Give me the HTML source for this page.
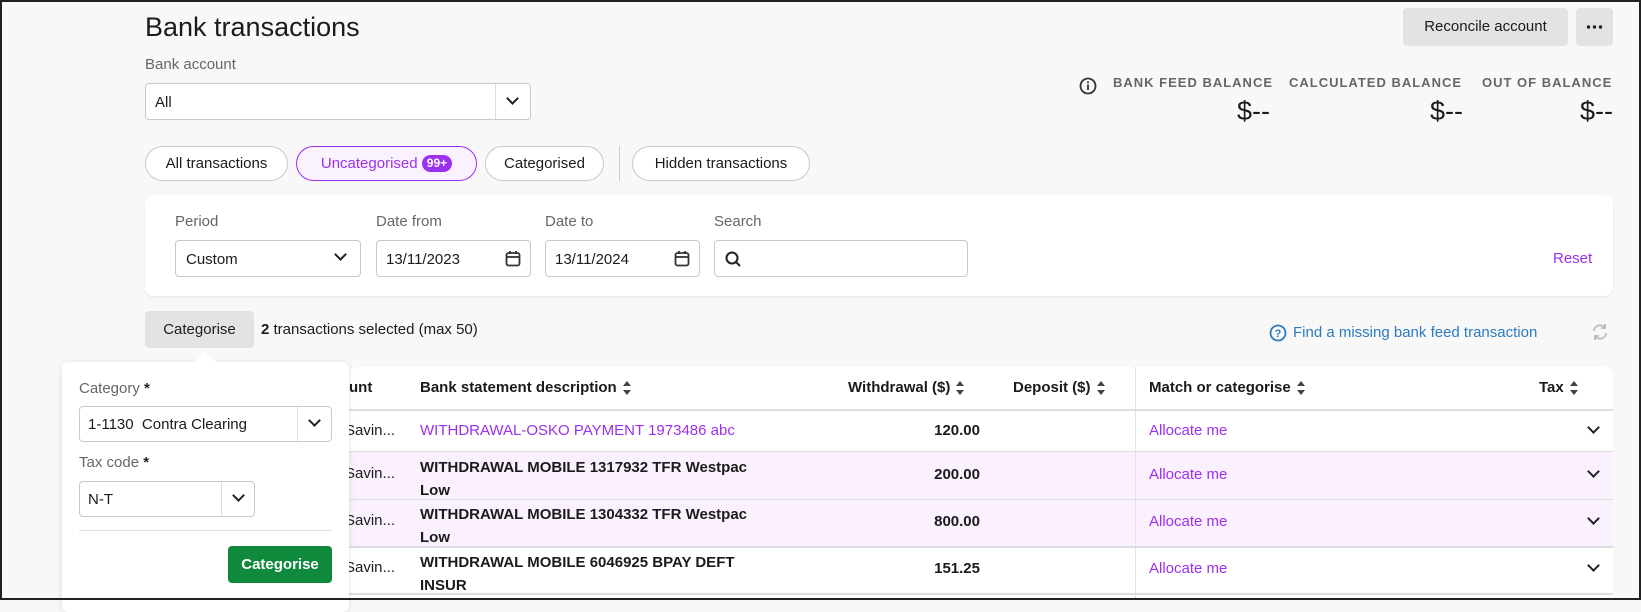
<!DOCTYPE html>
<html><head><meta charset="utf-8"><style>
*{box-sizing:border-box;margin:0;padding:0;white-space:nowrap}
body{width:1641px;height:600px;overflow:hidden;background:#f8f8f8;font-family:"Liberation Sans",sans-serif;color:#1b1b1b;position:relative;font-size:15px}
.frame{position:absolute;left:0;top:0;width:1641px;height:600px;border:2px solid #222;pointer-events:none;z-index:50}
.a{position:absolute}
.box{position:absolute;background:#fff;border:1px solid #c9c9c9;border-radius:4px}
.chev{position:absolute;width:9px;height:9px;border-right:2.2px solid #222;border-bottom:2.2px solid #222;transform:rotate(45deg)}
.pill{position:absolute;top:146px;height:35px;border:1px solid #c9c9c9;border-radius:18px;background:#fff;font-size:15px;line-height:33px;text-align:center}
.lbl{position:absolute;color:#666;font-size:15px}
.cap{position:absolute;color:#666;font-size:13px;font-weight:bold;letter-spacing:1px}
.big{position:absolute;font-size:27px;text-align:right}
.th{position:absolute;top:379px;font-weight:bold;font-size:15px}
.sort{display:inline-block;vertical-align:middle;margin-left:6px;width:8px;height:14px;position:relative}
.sort:before,.sort:after{content:"";position:absolute;left:0;border-left:4px solid transparent;border-right:4px solid transparent}
.sort:before{top:0;border-bottom:5px solid #444}.sort:after{bottom:0;border-top:5px solid #444}
.row{position:absolute;left:349px;width:1264px;border-top:1px solid #ddd}
.p{color:#9b30f0}
.cell{position:absolute;font-size:15px}
</style></head><body>
<div class="frame"></div>
<div class="a" style="left:145px;top:12px;font-size:27px">Bank transactions</div>
<div class="lbl" style="left:145px;top:56px">Bank account</div>
<div class="box" style="left:145px;top:83px;width:386px;height:37px"><span class="a" style="left:9px;top:10px">All</span><div class="a" style="left:349px;top:0;height:35px;border-left:1px solid #ddd"></div><div class="chev" style="left:362px;top:10px"></div></div>

<div class="pill" style="left:145px;width:143px">All transactions</div>
<div class="pill" style="left:296px;width:181px;border-color:#9b30f0;color:#9b30f0;background:#faf2fe">Uncategorised <span style="display:inline-block;background:#9b30f0;color:#fff;font-size:12px;font-weight:bold;border-radius:9px;padding:0 5px;line-height:17px;vertical-align:1px">99+</span></div>
<div class="pill" style="left:485px;width:119px">Categorised</div>
<div class="a" style="left:619px;top:146px;height:35px;border-left:1px solid #ccc"></div>
<div class="pill" style="left:632px;width:178px">Hidden transactions</div>

<div class="a" style="left:1403px;top:8px;width:165px;height:38px;background:#e3e3e3;border-radius:4px"><span class="a" style="left:0;width:165px;top:10px;text-align:center">Reconcile account</span></div>
<div class="a" style="left:1576px;top:8px;width:37px;height:38px;background:#e3e3e3;border-radius:4px">
<svg class="a" style="left:10px;top:17px" width="17" height="4"><circle cx="2.5" cy="2" r="1.7" fill="#222"/><circle cx="8.5" cy="2" r="1.7" fill="#222"/><circle cx="14.5" cy="2" r="1.7" fill="#222"/></svg></div>

<svg class="a" style="left:1079px;top:77px" width="18" height="18" viewBox="0 0 18 18"><circle cx="9" cy="9" r="7.5" fill="none" stroke="#333" stroke-width="1.8"/><circle cx="9" cy="5.3" r="1.1" fill="#333"/><rect x="8.1" y="7.5" width="1.8" height="5.5" fill="#333"/></svg>
<div class="cap" style="left:1113px;top:75px">BANK FEED BALANCE</div>
<div class="cap" style="left:1289px;top:75px">CALCULATED BALANCE</div>
<div class="cap" style="left:1482px;top:75px">OUT OF BALANCE</div>
<div class="big" style="right:371px;top:96px">$--</div>
<div class="big" style="right:178px;top:96px">$--</div>
<div class="big" style="right:28px;top:96px">$--</div>

<div class="a" style="left:145px;top:195px;width:1468px;height:101px;background:#fff;border-radius:8px;box-shadow:0 1px 2px rgba(0,0,0,.08)"></div>
<div class="lbl" style="left:175px;top:213px">Period</div>
<div class="lbl" style="left:376px;top:213px">Date from</div>
<div class="lbl" style="left:545px;top:213px">Date to</div>
<div class="lbl" style="left:714px;top:213px">Search</div>
<div class="box" style="left:175px;top:240px;width:186px;height:37px"><span class="a" style="left:10px;top:10px">Custom</span><div class="chev" style="left:160px;top:9px"></div></div>
<div class="box" style="left:376px;top:240px;width:155px;height:37px"><span class="a" style="left:9px;top:10px">13/11/2023</span>
<svg class="a" style="left:128px;top:9px" width="16" height="17" viewBox="0 0 16 17"><rect x="1.5" y="3" width="13" height="12.5" rx="2" fill="none" stroke="#333" stroke-width="1.8"/><line x1="1.5" y1="7" x2="14.5" y2="7" stroke="#333" stroke-width="1.8"/><line x1="5" y1="1" x2="5" y2="4" stroke="#333" stroke-width="1.8"/><line x1="11" y1="1" x2="11" y2="4" stroke="#333" stroke-width="1.8"/></svg></div>
<div class="box" style="left:545px;top:240px;width:155px;height:37px"><span class="a" style="left:9px;top:10px">13/11/2024</span>
<svg class="a" style="left:128px;top:9px" width="16" height="17" viewBox="0 0 16 17"><rect x="1.5" y="3" width="13" height="12.5" rx="2" fill="none" stroke="#333" stroke-width="1.8"/><line x1="1.5" y1="7" x2="14.5" y2="7" stroke="#333" stroke-width="1.8"/><line x1="5" y1="1" x2="5" y2="4" stroke="#333" stroke-width="1.8"/><line x1="11" y1="1" x2="11" y2="4" stroke="#333" stroke-width="1.8"/></svg></div>
<div class="box" style="left:714px;top:240px;width:254px;height:37px"><svg class="a" style="left:10px;top:10px" width="17" height="17" viewBox="0 0 17 17"><circle cx="7" cy="7" r="5.5" fill="none" stroke="#222" stroke-width="2"/><line x1="11" y1="11" x2="15" y2="15" stroke="#222" stroke-width="2"/></svg></div>
<div class="a p" style="left:1553px;top:250px">Reset</div>

<div class="a" style="left:145px;top:311px;width:109px;height:37px;background:#e3e3e3;border-radius:4px;text-align:center;line-height:37px">Categorise</div>
<div class="a" style="left:261px;top:321px"><b>2</b> transactions selected (max 50)</div>
<svg class="a" style="left:1269px;top:324px" width="18" height="18" viewBox="0 0 18 18"><circle cx="9" cy="9" r="7.5" fill="none" stroke="#2a7bbf" stroke-width="1.8"/><text x="9" y="13" font-size="11" font-weight="bold" text-anchor="middle" fill="#2a7bbf" font-family="Liberation Sans">?</text></svg>
<div class="a" style="left:1293px;top:324px;color:#2a7bbf">Find a missing bank feed transaction</div>
<svg class="a" style="left:1590px;top:322px" width="20" height="20" viewBox="0 0 20 20"><path d="M4 9a6 6 0 0 1 11-3M16 11a6 6 0 0 1-11 3" fill="none" stroke="#bbb" stroke-width="1.8"/><path d="M15 2v4h-4M5 18v-4h4" fill="none" stroke="#bbb" stroke-width="1.8"/></svg>

<div class="a" style="left:349px;top:367px;width:1264px;height:233px;background:#fff;border-radius:8px 8px 0 0"></div>
<div class="a" style="left:349px;top:451px;width:1264px;height:95px;background:#fbf0fd"></div>
<div class="a" style="left:1135px;top:367px;height:233px;border-left:1px solid #e2e2e2"></div>
<div class="row" style="top:409px;border-top:2px solid #ddd"></div>
<div class="row" style="top:451px"></div>
<div class="row" style="top:499px"></div>
<div class="row" style="top:546px;border-top:2px solid #ddd"></div>
<div class="row" style="top:593px;border-top:2px solid #ddd"></div>

<div class="th" style="left:349px">unt</div>
<div class="th" style="left:420px">Bank statement description<span class="sort"></span></div>
<div class="th" style="left:848px">Withdrawal ($)<span class="sort"></span></div>
<div class="th" style="left:1013px">Deposit ($)<span class="sort"></span></div>
<div class="th" style="left:1149px">Match or categorise<span class="sort"></span></div>
<div class="th" style="left:1539px">Tax<span class="sort"></span></div>

<div class="cell" style="left:345px;top:422px">Savin...</div>
<div class="cell p" style="left:420px;top:422px">WITHDRAWAL-OSKO PAYMENT 1973486 abc</div>
<div class="cell" style="left:900px;top:422px;width:80px;text-align:right;font-weight:bold">120.00</div>
<div class="cell p" style="left:1149px;top:422px">Allocate me</div>

<div class="cell" style="left:345px;top:465px">Savin...</div>
<div class="cell" style="left:420px;top:456px;font-weight:bold;line-height:23px">WITHDRAWAL MOBILE 1317932 TFR Westpac<br>Low</div>
<div class="cell" style="left:900px;top:466px;width:80px;text-align:right;font-weight:bold">200.00</div>
<div class="cell p" style="left:1149px;top:466px">Allocate me</div>

<div class="cell" style="left:345px;top:512px">Savin...</div>
<div class="cell" style="left:420px;top:503px;font-weight:bold;line-height:23px">WITHDRAWAL MOBILE 1304332 TFR Westpac<br>Low</div>
<div class="cell" style="left:900px;top:513px;width:80px;text-align:right;font-weight:bold">800.00</div>
<div class="cell p" style="left:1149px;top:513px">Allocate me</div>

<div class="cell" style="left:345px;top:559px">Savin...</div>
<div class="cell" style="left:420px;top:551px;font-weight:bold;line-height:23px">WITHDRAWAL MOBILE 6046925 BPAY DEFT<br>INSUR</div>
<div class="cell" style="left:900px;top:560px;width:80px;text-align:right;font-weight:bold">151.25</div>
<div class="cell p" style="left:1149px;top:560px">Allocate me</div>

<div class="chev" style="left:1589px;top:423px"></div>
<div class="chev" style="left:1589px;top:467px"></div>
<div class="chev" style="left:1589px;top:514px"></div>
<div class="chev" style="left:1589px;top:561px"></div>

<div class="a" style="left:62px;top:362px;width:287px;height:250px;background:#fff;border-radius:6px;box-shadow:0 1px 6px rgba(0,0,0,.12);z-index:5"></div>
<div class="a" style="left:197px;top:354px;width:16px;height:16px;background:#fff;transform:rotate(45deg);z-index:5"></div>
<div style="position:absolute;left:0;top:0;width:400px;height:600px;z-index:6">
<div class="lbl" style="left:79px;top:380px">Category <b style="color:#222">*</b></div>
<div class="box" style="left:79px;top:406px;width:253px;height:36px"><span class="a" style="left:8px;top:9px">1-1130&nbsp; Contra Clearing</span><div class="a" style="left:217px;top:0;height:34px;border-left:1px solid #ddd"></div><div class="chev" style="left:230px;top:9px"></div></div>
<div class="lbl" style="left:79px;top:454px">Tax code <b style="color:#222">*</b></div>
<div class="box" style="left:79px;top:481px;width:176px;height:36px"><span class="a" style="left:8px;top:9px">N-T</span><div class="a" style="left:141px;top:0;height:34px;border-left:1px solid #ddd"></div><div class="chev" style="left:154px;top:9px"></div></div>
<div class="a" style="left:79px;top:530px;width:253px;border-top:1px solid #ddd"></div>
<div class="a" style="left:228px;top:546px;width:104px;height:37px;background:#0f8a3c;border-radius:4px;color:#fff;font-weight:bold;text-align:center;line-height:37px">Categorise</div>
</div>
</body></html>
